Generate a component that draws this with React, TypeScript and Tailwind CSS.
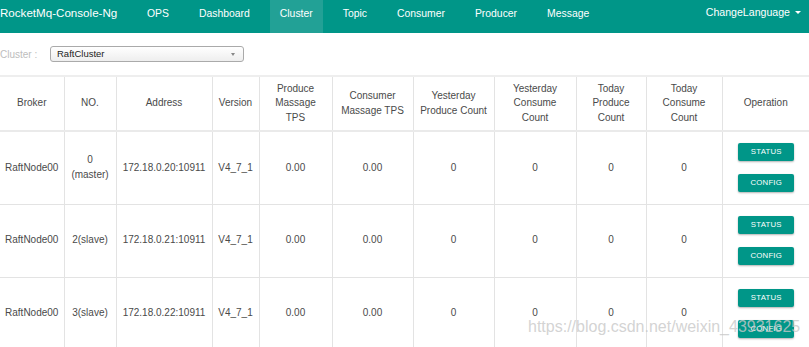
import React from "react";

const navItems = ["OPS", "Dashboard", "Cluster", "Topic", "Consumer", "Producer", "Message"];

const headers = [
  { label: "Broker", w: 64 },
  { label: "NO.", w: 52 },
  { label: "Address", w: 96 },
  { label: "Version", w: 47 },
  { label: "Produce Massage TPS", w: 73 },
  { label: "Consumer Massage TPS", w: 81 },
  { label: "Yesterday Produce Count", w: 81 },
  { label: "Yesterday Consume Count", w: 82 },
  { label: "Today Produce Count", w: 70 },
  { label: "Today Consume Count", w: 76 },
  { label: "Operation", w: 87 },
];

const rows = [
  { broker: "RaftNode00", no: ["0", "(master)"], address: "172.18.0.20:10911" },
  { broker: "RaftNode00", no: ["2(slave)"], address: "172.18.0.21:10911" },
  { broker: "RaftNode00", no: ["3(slave)"], address: "172.18.0.22:10911" },
];

function OpButton({ label }: { label: string }) {
  return (
    <button className="w-[56px] h-[18px] rounded-[2px] bg-[#009688] text-white text-[7.8px] tracking-[0.2px] shadow-[0_1px_2px_rgba(0,0,0,0.3)]">
      {label}
    </button>
  );
}

export default function App() {
  return (
    <div className="relative w-[809px] h-[347px] overflow-hidden bg-white text-[#4a4a4a] font-['Liberation_Sans',Arial,sans-serif]">
      <nav className="flex items-center h-[33px] bg-[#009688] text-white">
        <div className="text-[11.6px] w-[137px] pb-[7px]">RocketMq-Console-Ng</div>
        <ul className="flex h-full items-stretch gap-[10px] text-[10.4px]">
          {navItems.map((item) => (
            <li
              key={item}
              className={
                "flex items-center px-[10px] pb-[5px] " + (item === "Cluster" ? "bg-[#22a196]" : "")
              }
            >
              {item}
            </li>
          ))}
        </ul>
        <div className="ml-auto flex items-center gap-[5px] pr-[8px] pb-[8px] text-[10.6px]">
          ChangeLanguage
          <span className="inline-block w-0 h-0 border-x-[3px] border-x-transparent border-t-[3px] border-t-white" />
        </div>
      </nav>

      <div className="flex items-center h-[16px] mt-[13px] text-[10px]">
        <span className="w-[50px] text-[#bdbdbd]">Cluster :</span>
        <div className="flex items-center justify-between w-[194px] h-[16px] rounded-[3px] border border-[#aaa] bg-gradient-to-b from-white to-[#eee] pl-[6px] pr-[8px] text-[9.5px] text-[#222]">
          RaftCluster
          <span className="inline-block w-0 h-0 border-x-[2.5px] border-x-transparent border-t-[3px] border-t-[#888]" />
        </div>
      </div>

      <table className="table-fixed border-collapse w-[809px] mt-[13px] text-[10px] text-center leading-[14.5px]">
        <colgroup>
          {headers.map((h) => (
            <col key={h.label} style={{ width: h.w }} />
          ))}
        </colgroup>
        <thead>
          <tr className="h-[55px] border-t-[2px] border-t-[#eee] border-b-[2px] border-b-[#eaeaea]">
            {headers.map((h, i) => (
              <th
                key={h.label}
                className={
                  "font-normal px-[6px] align-middle " + (i > 0 ? "border-l border-l-[#e3e3e3]" : "")
                }
              >
                {h.label}
              </th>
            ))}
          </tr>
        </thead>
        <tbody>
          {rows.map((r, ri) => (
            <tr key={ri} className="h-[73px] border-b border-b-[#e3e3e3]">
              <td className="px-[2px]">{r.broker}</td>
              <td className="border-l border-l-[#e3e3e3]">
                {r.no.map((n) => (
                  <div key={n}>{n}</div>
                ))}
              </td>
              <td className="border-l border-l-[#e3e3e3]">{r.address}</td>
              <td className="border-l border-l-[#e3e3e3]">V4_7_1</td>
              <td className="border-l border-l-[#e3e3e3]">0.00</td>
              <td className="border-l border-l-[#e3e3e3]">0.00</td>
              <td className="border-l border-l-[#e3e3e3]">0</td>
              <td className="border-l border-l-[#e3e3e3]">0</td>
              <td className="border-l border-l-[#e3e3e3]">0</td>
              <td className="border-l border-l-[#e3e3e3]">0</td>
              <td className="border-l border-l-[#e3e3e3]">
                <div className="flex flex-col items-center gap-[13px] pl-[1px]">
                  <OpButton label="STATUS" />
                  <OpButton label="CONFIG" />
                </div>
              </td>
            </tr>
          ))}
        </tbody>
      </table>

      <div className="absolute left-[528px] top-[315px] text-[16px] text-[#c8c8c8]/80 pointer-events-none">
        https://blog.csdn.net/weixin_43931625
      </div>
    </div>
  );
}
